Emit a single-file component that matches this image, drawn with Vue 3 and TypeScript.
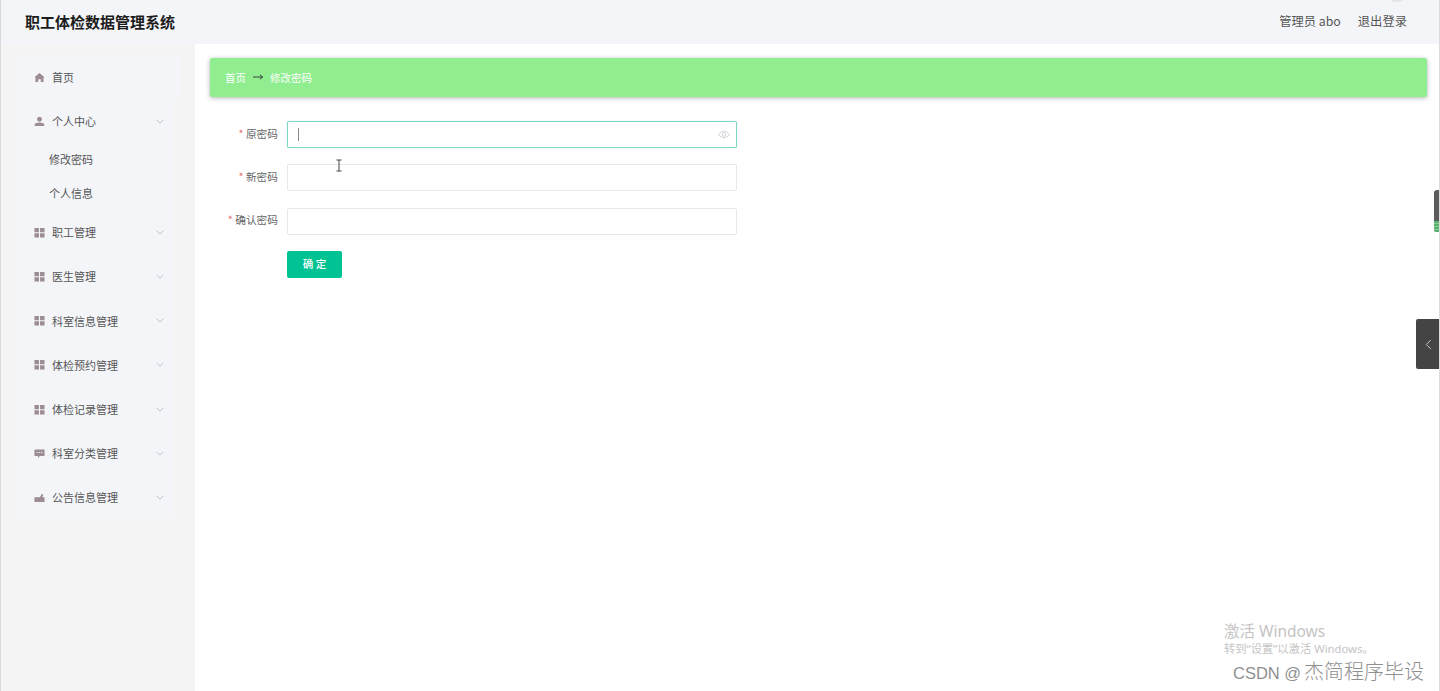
<script setup lang="ts">
type Icon = 'home' | 'user' | 'grid' | 'chat' | 'case'
interface MenuItem { label: string; icon: Icon; arrow: boolean; children?: string[] }
const menu: MenuItem[] = [
  { label: '首页', icon: 'home', arrow: false },
  { label: '个人中心', icon: 'user', arrow: true, children: ['修改密码', '个人信息'] },
  { label: '职工管理', icon: 'grid', arrow: true },
  { label: '医生管理', icon: 'grid', arrow: true },
  { label: '科室信息管理', icon: 'grid', arrow: true },
  { label: '体检预约管理', icon: 'grid', arrow: true },
  { label: '体检记录管理', icon: 'grid', arrow: true },
  { label: '科室分类管理', icon: 'chat', arrow: true },
  { label: '公告信息管理', icon: 'case', arrow: true },
]
const fields = ['原密码', '新密码', '确认密码']
</script>

<template>
  <div class="page">
    <header class="topbar">
      <div class="title">职工体检数据管理系统</div>
      <div class="account">
        <span>管理员 abo</span>
        <span>退出登录</span>
      </div>
    </header>
    <div class="body">
      <aside class="side">
        <nav class="menu">
          <template v-for="(m, i) in menu" :key="m.label">
            <div class="item" :class="{ first: i === 0 }">
              <svg class="ico" viewBox="0 0 12 12">
                <path v-if="m.icon === 'home'" d="M6 1 .8 5.400 1.600 6.300V11h3V7.800h2.800V11h3V6.300l.8-.9z" />
                <path v-else-if="m.icon === 'user'" d="M6 .8a2.700 2.700 0 1 1 0 5.400A2.700 2.700 0 0 1 6 .8zM.8 11V9.400C.8 7.900 3.400 7 6 7s5.200.9 5.200 2.400V11z" />
                <path v-else-if="m.icon === 'grid'" d="M.5 1h4.900v4.600H.5zM6.600 1h4.900v4.600H6.600zM.5 6.800h4.900v4.600H.5zM6.600 6.800h4.900v4.600H6.600z" />
                <path v-else-if="m.icon === 'chat'" fill-rule="evenodd" d="M.5 1.500h11v7.300H6.400L4.400 11V8.800H.5zM3 4.300v1.200h1.300V4.300zM5.400 4.300v1.200h1.300V4.300zM7.800 4.300v1.200h1.300V4.300z" />
                <path v-else d="M.5 5.600h5.900L8.600 1.800l1.500.9-1 2.900h2.400V11H.5z" />
              </svg>
              <span class="label">{{ m.label }}</span>
              <svg v-if="m.arrow" class="arrow" viewBox="0 0 10 6"><path d="M1 1l4 4 4-4" /></svg>
            </div>
            <div v-for="c in m.children" :key="c" class="sub">{{ c }}</div>
          </template>
        </nav>
      </aside>
      <main class="main">
        <div class="crumb">
          <span>首页</span>
          <svg class="crumb-arrow" viewBox="0 0 12 8"><path d="M0 4h10.500M7.500 1.600 10.500 4 7.500 6.400" /></svg>
          <span>修改密码</span>
        </div>
        <form class="form" @submit.prevent>
          <div v-for="(f, i) in fields" :key="f" class="row">
            <label class="field-label"><i>*</i> {{ f }}</label>
            <div class="input" :class="{ focus: i === 0 }">
              <template v-if="i === 0">
                <span class="caret"></span>
                <svg class="eye" viewBox="0 0 14 10"><path d="M.8 5C2.300 2.500 4.400 1.200 7 1.200S11.700 2.500 13.200 5C11.700 7.500 9.600 8.800 7 8.800S2.300 7.500.8 5z" /><circle cx="7" cy="5" r="2.200" /></svg>
              </template>
            </div>
          </div>
          <div class="actions"><button class="btn" type="button">确 定</button></div>
        </form>
      </main>
    </div>

    <span class="top-arc"></span>
    <div class="scroller"><span></span></div>
    <div class="tab">
      <svg viewBox="0 0 8 12"><path d="M6.500 1 1.500 6l5 5" /></svg>
    </div>
    <svg class="cursor" viewBox="0 0 8 13"><path d="M1.500 1h5M1.500 12h5M4 1v11" /></svg>
    <div class="activate">
      <div class="a1">激活 Windows</div>
      <div class="a2">转到“设置”以激活 Windows。</div>
    </div>
    <div class="csdn"><span class="csdn-latin">CSDN @</span><span class="csdn-cjk">杰简程序毕设</span></div>
  </div>
</template>

<style>
html, body { margin: 0; overflow: hidden; background: #fff; }
</style>

<style scoped>
.page {
  position: relative;
  width: 1440px;
  height: 691px;
  box-sizing: border-box;
  display: flex;
  flex-direction: column;
  overflow: hidden;
  background: #fff;
  border-left: 1px solid #d9d9d9;
  border-right: 1px solid #dcdcdc;
  font-family: "Noto Sans CJK SC", "Noto Sans", sans-serif;
  color: #555;
}
.topbar {
  height: 44px;
  flex: none;
  display: flex;
  align-items: center;
  justify-content: space-between;
  padding: 0 32px 2px 24px;
  box-sizing: border-box;
  background: #f4f5f9;
}
.title { font-size: 15px; font-weight: 700; color: #1c1c1c; }
.account { display: flex; gap: 17px; font-size: 12.300px; color: #555; }
.body { flex: 1; display: flex; min-height: 0; }
.side {
  width: 194px;
  flex: none;
  background: #f4f4f4;
  padding-top: 11px;
  box-sizing: border-box;
}
.menu {
  width: 159px;
  margin-left: 13px;
  background: #f4f5f9;
}
.item {
  height: 44.200px;
  display: flex;
  align-items: center;
  padding-left: 20px;
  box-sizing: border-box;
  font-size: 11px;
  color: #555;
  position: relative;
}
.item.first { width: 166px; background: #f4f5f9; }
.ico { width: 11px; height: 11px; fill: #9c8c93; flex: none; margin-right: 7px; }
.label { flex: 1; }
.arrow {
  width: 8px;
  height: 5px;
  margin-right: 9px;
  fill: none;
  stroke: #b4b4ba;
  stroke-width: 1;
}
.sub {
  height: 33.400px;
  line-height: 33.400px;
  padding-left: 35px;
  font-size: 11px;
  color: #555;
}
.main { flex: 1; padding: 14px 12px 0 15px; min-width: 0; }
.crumb {
  height: 39px;
  display: flex;
  align-items: center;
  padding: 0 0 1px 15px;
  box-sizing: border-box;
  gap: 6.500px;
  font-size: 10.500px;
  color: #fff;
  background: #90ee90;
  border-radius: 2px;
  box-shadow: 0 1px 5px rgba(0, 0, 0, 0.3);
}
.crumb-arrow { width: 11px; height: 8px; fill: none; stroke: #333; stroke-width: 1; }
.form { padding-top: 24px; }
.row { display: flex; align-items: center; margin-bottom: 16.400px; }
.field-label {
  width: 68px;
  text-align: right;
  font-size: 10.700px;
  line-height: 14px;
  padding-bottom: 2px;
  color: #666;
  margin-right: 9px;
  flex: none;
}
.field-label i { font-style: normal; color: #e57373; }
.input {
  width: 450px;
  height: 27px;
  box-sizing: border-box;
  border: 1px solid #e8e8ec;
  border-radius: 2px;
  background: #fff;
  display: flex;
  align-items: center;
  justify-content: space-between;
  padding: 0 6px 0 10px;
}
.input.focus { border-color: #7fd8c4; box-shadow: 0 0 1px #7fd8c4; }
.caret { width: 1px; height: 13px; background: #888; }
.eye { width: 12px; height: 9px; fill: none; stroke: #c8ccd2; stroke-width: 1; }
.actions { display: flex; padding-left: 77px; }
.btn {
  width: 55px;
  height: 27px;
  border: none;
  border-radius: 2px;
  background: #00c292;
  color: #fff;
  font: 500 10.500px "Noto Sans CJK SC", sans-serif;
  padding: 0 0 2px;
}
.top-arc {
  position: absolute;
  top: -12px;
  right: 32px;
  width: 20px;
  height: 14px;
  border-radius: 50%;
  background: #e4e4e6;
}
.scroller {
  position: absolute;
  right: -1px;
  top: 190px;
  width: 6px;
  height: 42px;
  border-radius: 3px 0 0 3px;
  background: #5c5c5c;
  overflow: hidden;
}
.scroller span {
  display: block;
  margin-top: 31px;
  height: 11px;
  background: repeating-linear-gradient(#58b26c 0 2px, #8ccc98 2px 3px);
}
.tab {
  position: absolute;
  right: -1px;
  top: 319px;
  width: 24px;
  height: 50px;
  border-radius: 2px 0 0 2px;
  background: #444;
  display: flex;
  align-items: center;
  justify-content: center;
}
.tab svg { width: 7px; height: 11px; fill: none; stroke: #ddd; stroke-width: 1; }
.cursor {
  position: absolute;
  left: 334px;
  top: 159px;
  width: 8px;
  height: 13px;
  fill: none;
  stroke: #444;
  stroke-width: 1;
}
.activate {
  position: absolute;
  left: 1223px;
  top: 621px;
  color: #c4c4c4;
  white-space: nowrap;
  font-family: "Noto Sans", "Noto Sans CJK SC", sans-serif;
}
.a1 { font-size: 15.500px; line-height: 20px; }
.a2 { font-size: 11.300px; line-height: 16px; }
.csdn {
  position: absolute;
  left: 1232px;
  top: 657px;
  line-height: 28px;
  color: #8f8f8f;
  white-space: nowrap;
  display: flex;
  align-items: baseline;
  gap: 3px;
}
.csdn-latin { font-family: "Liberation Sans", sans-serif; font-size: 16.500px; }
.csdn-cjk { font-family: "Noto Sans CJK SC", sans-serif; font-size: 20px; font-weight: 300; }
</style>
